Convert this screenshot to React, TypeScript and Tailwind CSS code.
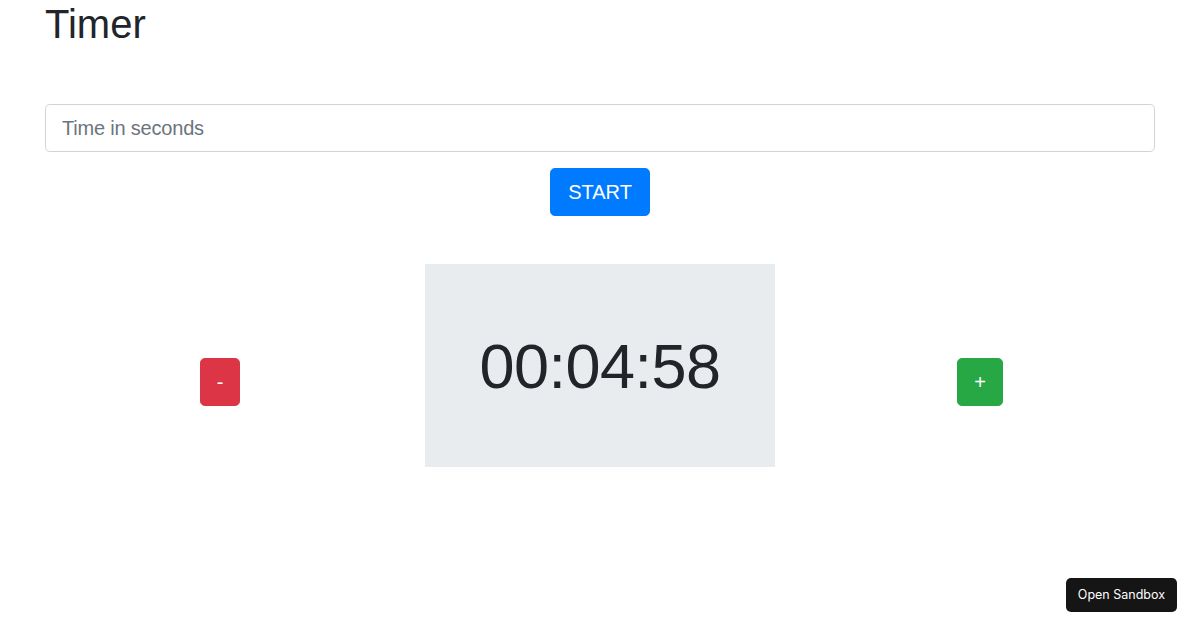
// Countdown timer page: title, seconds input, start button, and the -/clock/+ row.
import { useState } from 'react';

const pad = (n: number): string => String(n).padStart(2, '0');

const formatTime = (total: number): string => {
  const h = Math.floor(total / 3600);
  const m = Math.floor((total % 3600) / 60);
  const s = total % 60;
  return `${pad(h)}:${pad(m)}:${pad(s)}`;
};

export default function App(): JSX.Element {
  const [seconds, setSeconds] = useState(298);
  const [input, setInput] = useState('');

  return (
    <div className="relative min-h-[630px] w-full bg-white font-['Liberation_Sans',Arial,sans-serif] text-[#212529]">
      <div className="mx-auto w-[1110px]">
        <h1 className="mb-[56px] text-[40px] font-normal leading-[48px]">Timer</h1>

        <input
          type="text"
          value={input}
          onChange={(e) => setInput(e.target.value)}
          placeholder="Time in seconds"
          className="block h-[48px] w-full rounded-[4.8px] border border-[#ced4da] bg-white px-4 text-[20px] tracking-[-0.2px] text-[#495057] placeholder:text-[#6c757d] focus:outline-none"
        />

        <div className="mt-4 flex justify-center">
          <button
            type="button"
            onClick={() => {
              const n = parseInt(input, 10);
              if (!Number.isNaN(n)) setSeconds(n);
            }}
            className="h-[48px] rounded-[4.8px] border border-[#007bff] bg-[#007bff] px-[17px] text-[20px] leading-[30px] text-white"
          >
            START
          </button>
        </div>
      </div>

      <div className="mx-auto mt-[48px] flex w-[1140px]">
        <div className="flex w-[380px] items-center justify-center px-[15px]">
          <button
            type="button"
            onClick={() => setSeconds((s) => Math.max(0, s - 1))}
            className="mt-[32px] h-[48px] rounded-[4.8px] border border-[#dc3545] bg-[#dc3545] px-4 text-[20px] leading-[30px] text-white"
          >
            -
          </button>
        </div>
        <div className="w-[380px] px-[15px]">
          <div className="flex h-[203px] items-center justify-center bg-[#e9ecef]">
            <span className="pt-[2px] text-[63px] leading-none tracking-[-0.5px]">{formatTime(seconds)}</span>
          </div>
        </div>
        <div className="flex w-[380px] items-center justify-center px-[15px]">
          <button
            type="button"
            onClick={() => setSeconds((s) => s + 1)}
            className="mt-[32px] h-[48px] rounded-[4.8px] border border-[#28a745] bg-[#28a745] px-4 text-[20px] leading-[30px] text-white"
          >
            +
          </button>
        </div>
      </div>

      {/* sandbox overlay button */}
      <button
        type="button"
        className="absolute bottom-[18px] right-[23px] h-[34px] rounded-[5px] bg-[#151515] px-[12px] font-['Inter',sans-serif] text-[12.5px] text-white"
      >
        Open Sandbox
      </button>
    </div>
  );
}
